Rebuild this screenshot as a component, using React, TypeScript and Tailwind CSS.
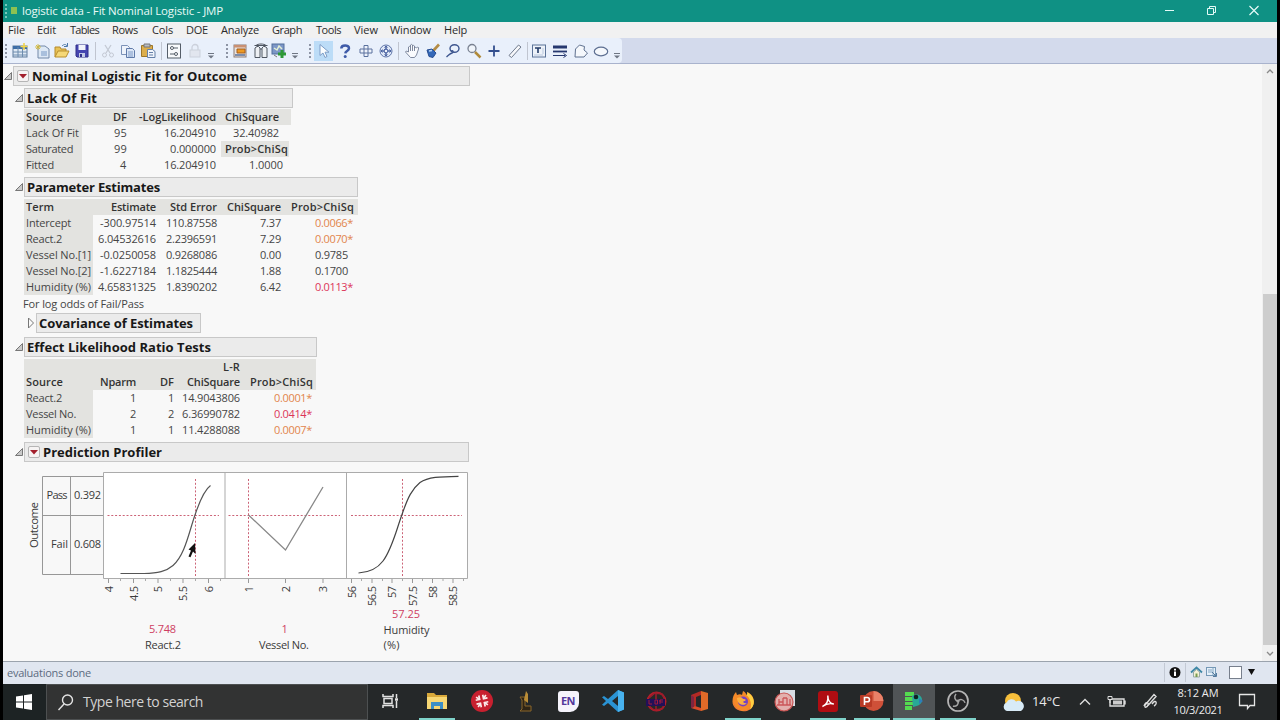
import { useLayoutEffect, useRef, type ReactNode } from "react";

/** Text whose letter spacing is adjusted so that it fills a given width. */
function Fit({ w, children, className = "" }: { w: number; children: string; className?: string }) {
  const ref = useRef<HTMLSpanElement>(null);
  useLayoutEffect(() => {
    const el = ref.current;
    if (!el) return;
    el.style.letterSpacing = "0px";
    const natural = el.getBoundingClientRect().width;
    el.style.letterSpacing = `${(w - natural) / children.length}px`;
  }, [w, children]);
  return (
    <span ref={ref} className={`inline-block whitespace-nowrap ${className}`}>
      {children}
    </span>
  );
}

function Icon({ children, size = 16 }: { children: ReactNode; size?: number }) {
  return (
    <svg width={size} height={size} viewBox="0 0 16 16" fill="none" className="shrink-0">
      {children}
    </svg>
  );
}

/* ---------- toolbar ---------- */

const table = (
  <>
    <rect x="1" y="3" width="14" height="11" fill="#dfe9f4" stroke="#5f7b9c" />
    <path d="M1 3h14v3H1z" fill="#3d6ea8" />
    <path d="M1 9h14M1 12h14M6 4v10M10.500 4v10" stroke="#6d8cae" />
    <path d="M12 0v7M8.500 3.500h7" stroke="#f2d64b" strokeWidth="1.600" />
  </>
);
const newScript = (
  <>
    <path d="M4 3h7l4 3v9H4z" fill="#dce8f5" stroke="#7389a8" />
    <path d="M7 8h6v5H7z" fill="#a9c0dd" />
    <path d="M4 1v6M1 4h6M2 2l4 4M6 2L2 6" stroke="#d3b93c" strokeWidth="0.900" />
  </>
);
const open = (
  <>
    <path d="M1 14V4h5l1 2h5v3" fill="#e8c256" stroke="#b48a2c" />
    <path d="M1 14l3-6h11l-3 6z" fill="#f5d878" stroke="#b98f2e" />
    <path d="M8 3c2-2 4-2 5 0M13.500 0v3.500H10" stroke="#4c77a8" />
  </>
);
const save = (
  <>
    <path d="M2 2h12v12H3l-1-1z" fill="#4545b0" stroke="#303089" />
    <path d="M4.500 2h7v5h-7z" fill="#f1f4fb" />
    <path d="M5 10h6v4H5z" fill="#c3cae6" />
    <path d="M6 11h2v3H6z" fill="#303089" />
  </>
);
const cut = (
  <>
    <path d="M5 2l5 8M11 2L6 10" stroke="#c4c9d4" strokeWidth="1.300" />
    <circle cx="4.500" cy="12" r="2" stroke="#c4c9d4" />
    <circle cx="11.500" cy="12" r="2" stroke="#c4c9d4" />
  </>
);
const copy = (
  <>
    <path d="M1.500 2.500h6l2 2v7h-8z" fill="#eef3fb" stroke="#7c92b8" />
    <path d="M6.500 5.500h6l2 2v7h-8z" fill="#dbe6f6" stroke="#5f7aa9" />
    <path d="M8 9h5M8 11h5M8 13h5" stroke="#7f9bc8" />
  </>
);
const paste = (
  <>
    <path d="M1.500 2.500h11v11h-11z" fill="#dcae4c" stroke="#9e7728" />
    <path d="M4 1h6v3H4z" fill="#b9bcc2" stroke="#777" />
    <path d="M7.500 6.500h5l2.500 2v6H7.500z" fill="#f1f5fb" stroke="#6580a8" />
    <path d="M9 9.500h4M9 12h4" stroke="#6580a8" />
  </>
);
const prefs = (
  <>
    <rect x="1.500" y="1" width="13" height="14" fill="#f8fafc" stroke="#555e69" />
    <path d="M4 5h8M4 11h8" stroke="#555e69" />
    <circle cx="6" cy="5" r="1.500" fill="#fff" stroke="#555e69" />
    <circle cx="10" cy="11" r="1.500" fill="#fff" stroke="#555e69" />
  </>
);
const lock = (
  <>
    <path d="M5 7V4.500a3 3 0 016 0V7" stroke="#ccd1dc" strokeWidth="1.300" />
    <rect x="3" y="7" width="10" height="7" fill="#e2e6ef" stroke="#ccd1dc" />
  </>
);
const journal = (
  <>
    <rect x="2" y="2" width="12" height="12" fill="#e9e4e0" stroke="#8d7b74" />
    <path d="M2 2h12v2.500H2z" fill="#c99073" />
    <path d="M5 6h8v4H5z" fill="#ee9a22" stroke="#a65c1c" />
    <path d="M3 12h10" stroke="#59729d" strokeWidth="1.500" />
  </>
);
const binocular = (
  <>
    <path d="M2 14.500V5l2-1.500h1.500L7 5v9.500zM9 14.500V5l1.500-1.500H12L14 5v9.500z" fill="#edf0f4" stroke="#4f5661" />
    <path d="M7 6h2M1.500 2.500h13M3 2.500c2-2 8-2 10 0" stroke="#4f5661" />
  </>
);
const addPlot = (
  <>
    <rect x="1" y="1" width="12" height="10" fill="#7d97c7" stroke="#536f9c" />
    <path d="M3 5l3 2 2-4 3 3" stroke="#e4f0d4" strokeWidth="1.500" />
    <path d="M3 12l3 2" stroke="#777" />
    <path d="M11 7v8M7 11h8" stroke="#2f9a38" strokeWidth="3" />
  </>
);
const arrow = (
  <path d="M4 1.500v11l3-2.500 2 4.500 2-1-2-4.300h4z" fill="#fafdff" stroke="#7e9dc6" />
);
const help = (
  <>
    <path d="M4.300 5.500C4.300 1.500 12 1.500 12 5.300c0 2.700-3.500 2.600-3.700 5" stroke="#3f5ba8" strokeWidth="2.500" />
    <circle cx="8.200" cy="13.500" r="1.500" fill="#3f5ba8" />
  </>
);
const cross = (
  <path d="M6 2.500h4V6h4v4h-4v3.500H6V10H2V6h4zM6 6h4v4H6z" fill="#eef3fb" stroke="#5a719e" />
);
const target = (
  <>
    <circle cx="8" cy="8" r="6" fill="#dfe8f7" stroke="#5d73a8" />
    <path d="M8 3v10M3 8h10" stroke="#4c64a2" strokeWidth="1.600" />
    <path d="M6.500 4.500L8 3l1.500 1.500M6.500 11.500L8 13l1.500-1.500M4.500 6.500L3 8l1.500 1.500M11.500 6.500L13 8l-1.500 1.500" stroke="#4c64a2" />
    <rect x="6.500" y="6.500" width="3" height="3" fill="#eef3fb" stroke="#4c64a2" strokeWidth="0.800" />
  </>
);
const hand = (
  <path
    d="M4.500 9V4q1.200-1.200 2 0V2q1-1.200 2 0v1q1-1.200 2 0v2q1-1.200 2 0l1-1q1.500 0 1 2l-2 6-2 2.500H6.500L1.500 9q0-2 3 0M6.500 4v4M8.500 3v5M10.500 4v4"
    fill="#fafbfe"
    stroke="#727d94"
    strokeWidth="0.900"
  />
);
const brush = (
  <>
    <path d="M8 8l6-6.500" stroke="#b38b45" strokeWidth="2.600" />
    <path d="M2 7l5-1 4 4-3 4.500-4-1z" fill="#3468b8" stroke="#274d91" />
    <path d="M4 8l3-.500" stroke="#b6d3f5" strokeWidth="1.500" />
  </>
);
const lassoTool = (
  <>
    <ellipse cx="9.500" cy="5.500" rx="4.500" ry="3.800" stroke="#3e568f" strokeWidth="1.400" />
    <path d="M6 8.500c2-2 3 1 1 1.500S5 11 1.500 14" stroke="#3e568f" strokeWidth="1.400" />
  </>
);
const magnify = (
  <>
    <circle cx="6" cy="5.500" r="4" fill="#f0f5fb" stroke="#798191" strokeWidth="1.300" />
    <path d="M9 9l5.500 5.500" stroke="#b08a3a" strokeWidth="2.500" />
  </>
);
const plus = <path d="M8 2.500v11M2.500 8h11" stroke="#334f8e" strokeWidth="1.800" />;
const annotate = (
  <path d="M2 12.500L11.500 2l2.500 2L4.500 14.500z" fill="#f7f8fb" stroke="#707b8d" />
);
const textBox = (
  <>
    <rect x="1.500" y="2" width="13" height="12" fill="#edf2f9" stroke="#5b7398" />
    <path d="M4 5h6M7 5v5" stroke="#243c68" strokeWidth="1.600" />
    <path d="M12 5v6M3 12h9" stroke="#b9c8de" />
  </>
);
const lines = (
  <>
    <path d="M1 4h14" stroke="#26386f" strokeWidth="3" />
    <path d="M1 8.500h14" stroke="#26386f" strokeWidth="1.800" />
    <path d="M1 12.500h12M11.500 10.500l3 2-3 2" stroke="#26386f" />
  </>
);
const polygon = <path d="M2.500 6l4-4 5 1.500-.500 3.500 3.500 3-3.500 4H2z" fill="#f5f8fc" stroke="#5f718f" />;
const oval = <ellipse cx="8" cy="8.500" rx="6.700" ry="4.300" fill="#f5f8fc" stroke="#5d6f91" strokeWidth="1.200" />;

function Tool({ icon, cell, active }: { icon: ReactNode; cell: string; active?: boolean }) {
  return (
    <div className={`flex h-full shrink-0 items-center justify-center ${cell}`}>
      <div className={active ? "flex h-[20px] w-[19px] items-center justify-center bg-[#bcdcf7]" : ""}>
        <Icon>{icon}</Icon>
      </div>
    </div>
  );
}

const Grip = ({ cell }: { cell: string }) => (
  <div className={`flex h-full shrink-0 items-center justify-end pr-[2px] ${cell}`}>
    <div className="flex flex-col gap-[2px]">
      <i className="size-[2px] bg-[#8d94a4]" />
      <i className="size-[2px] bg-[#8d94a4]" />
      <i className="size-[2px] bg-[#8d94a4]" />
      <i className="size-[2px] bg-[#8d94a4]" />
    </div>
  </div>
);
const Sep = ({ cell }: { cell: string }) => (
  <div className={`flex h-full shrink-0 items-center justify-center ${cell}`}>
    <div className="h-[18px] w-px bg-[#c0c5d0]" />
  </div>
);
const More = ({ cell }: { cell: string }) => (
  <div className={`flex h-full shrink-0 items-end justify-center pb-[4px] pr-[2px] ${cell}`}>
    <svg width="6" height="6">
      <path d="M0 .500h6" stroke="#6f7683" />
      <path d="M0 2.500h6l-3 3z" fill="#6f7683" />
    </svg>
  </div>
);

function Toolbar() {
  return (
    <div className="h-[26px] border-b border-[#a9b3cd] bg-[#d3daec]">
      <div className="flex h-[25px] w-[619px] items-center rounded-r bg-[#e9f0fb]">
        <Grip cell="w-[6px]" />
        <Tool icon={table} cell="w-[22px]" />
        <Tool icon={newScript} cell="w-[21px]" />
        <Tool icon={open} cell="w-[20px]" />
        <Tool icon={save} cell="w-[20px]" />
        <Sep cell="w-[6px]" />
        <Tool icon={cut} cell="w-[20px]" />
        <Tool icon={copy} cell="w-[19px]" />
        <Tool icon={paste} cell="w-[22px]" />
        <Sep cell="w-[4px]" />
        <Tool icon={prefs} cell="w-[22px]" />
        <Tool icon={lock} cell="w-[20px]" />
        <More cell="w-[13px]" />
        <Grip cell="w-[12px]" />
        <Tool icon={journal} cell="w-[20px]" />
        <Tool icon={binocular} cell="w-[21px]" />
        <Tool icon={addPlot} cell="w-[16px]" />
        <More cell="w-[18px]" />
        <Grip cell="w-[8px]" />
        <Tool icon={arrow} cell="w-[21px]" active />
        <Tool icon={help} cell="w-[21px]" />
        <Tool icon={cross} cell="w-[21px]" />
        <Tool icon={target} cell="w-[20px]" />
        <Sep cell="w-[5px]" />
        <Tool icon={hand} cell="w-[21px]" />
        <Tool icon={brush} cell="w-[21px]" />
        <Tool icon={lassoTool} cell="w-[20px]" />
        <Tool icon={magnify} cell="w-[21px]" />
        <Tool icon={plus} cell="w-[20px]" />
        <Tool icon={annotate} cell="w-[21px]" />
        <Sep cell="w-[4px]" />
        <Tool icon={textBox} cell="w-[20px]" />
        <Tool icon={lines} cell="w-[21px]" />
        <Tool icon={polygon} cell="w-[21px]" />
        <Tool icon={oval} cell="w-[20px]" />
        <More cell="w-[14px]" />
      </div>
    </div>
  );
}

/* ---------- title and menu ---------- */

function TitleBar() {
  return (
    <div className="flex h-[22px] items-center bg-[#0f9184] text-white">
      <svg width="14" height="16" className="ml-px">
        <path d="M2 1v14" stroke="#8fd6c8" strokeWidth="1.600" strokeDasharray="2 2" />
        <rect x="7" y="4" width="6" height="7" fill="#8cc152" />
      </svg>
      <Fit w={201} className="ml-[4px] text-[11.500px] leading-[22px] text-[#e8faf7]">
        logistic data - Fit Nominal Logistic - JMP
      </Fit>
      <svg width="102" height="16" className="ml-auto mr-[16px]" fill="none" stroke="#e4fbf7">
        <path d="M6 7.500h9" />
        <path d="M48.500 5.500h6v6h-6zM50.500 5V3.500h6v6H55" />
        <path d="M90.500 3l9 9M99.500 3l-9 9" strokeWidth="1.200" />
      </svg>
    </div>
  );
}

function MenuBar() {
  return (
    <div className="flex h-[16px] items-center bg-[#f1f1f1] pl-[5px] text-[11px] leading-[16px] text-[#2b2b2b]">
      <Fit w={17} className="mr-[12px]">File</Fit>
      <Fit w={19} className="mr-[14px]">Edit</Fit>
      <Fit w={29} className="mr-[13px]">Tables</Fit>
      <Fit w={26} className="mr-[14px]">Rows</Fit>
      <Fit w={21} className="mr-[13px]">Cols</Fit>
      <Fit w={22} className="mr-[13px]">DOE</Fit>
      <Fit w={38} className="mr-[13px]">Analyze</Fit>
      <Fit w={30} className="mr-[14px]">Graph</Fit>
      <Fit w={25} className="mr-[13px]">Tools</Fit>
      <Fit w={24} className="mr-[12px]">View</Fit>
      <Fit w={41} className="mr-[13px]">Window</Fit>
      <Fit w={23}>Help</Fit>
    </div>
  );
}

/* ---------- report ---------- */

function Heading({
  title,
  w,
  box,
  indent,
  menu,
  closed,
}: {
  title: string;
  w: number;
  box: string;
  indent: string;
  menu?: boolean;
  closed?: boolean;
}) {
  return (
    <div className={`flex h-[20px] items-center ${indent}`}>
      <svg width="10" height="12" className="shrink-0" stroke="#777" fill={closed ? "#fafafa" : "#c9c9c9"}>
        {closed ? <path d="M2.500 1l5 5-5 5z" /> : <path d="M1.500 9.500h7v-7z" />}
      </svg>
      <div className={`flex h-[20px] items-center border border-[#c8c8c8] bg-[#ebebeb] ${box}`}>
        {menu && (
          <div className="ml-[3px] mr-[3px] flex h-[12px] w-[12px] items-center justify-center rounded-[2px] border border-[#b5b5b5] bg-[#f6f3f3]">
            <svg width="8" height="5">
              <path d="M0 0h8L4 4.500z" fill="#a31f2c" />
            </svg>
          </div>
        )}
        <Fit w={w} className={`text-[13px] font-bold leading-[18px] text-[#181818] ${menu ? "" : "ml-[2px]"}`}>
          {title}
        </Fit>
      </div>
    </div>
  );
}

type Cell = { t: string; w: number; c?: string };

function Row({ cells, cols, className = "" }: { cells: Cell[]; cols: string; className?: string }) {
  return (
    <div className={`grid h-[16px] leading-[16px] ${cols} ${className}`}>
      {cells.map((cell, i) => (
        <div
          key={i}
          className={`${i === 0 ? "bg-[#e3e3e0] pl-[2px] text-left" : "text-right"} ${cell.c ?? ""}`}
        >
          {cell.t && <Fit w={cell.w}>{cell.t}</Fit>}
        </div>
      ))}
    </div>
  );
}

const c = (t: string, w: number, cls?: string): Cell => ({ t, w, c: cls });
const ORANGE = "text-[#e2854c] pr-[1px]";
const RED = "text-[#dc3558] pr-[1px]";
const HEAD = "bg-[#e3e3e0] font-semibold text-[#333]";

const LACK = "grid-cols-[58px_45px_89px_75px]";
const PARAM = "grid-cols-[69px_64px_60px_64px_77px]";
const EFFECT = "grid-cols-[69px_44px_37px_66px_76px]";

function LackOfFit() {
  return (
    <div className="ml-[21px] mt-px w-[267px]">
      <Row
        cols={LACK}
        className={HEAD}
        cells={[c("Source", 37), c("DF", 14), c("-LogLikelihood", 77), c("ChiSquare", 54, "pr-[12px]")]}
      />
      <Row cols={LACK} cells={[c("Lack Of Fit", 53), c("95", 13), c("16.204910", 52), c("32.40982", 46, "pr-[12px]")]} />
      <Row
        cols={LACK}
        cells={[
          c("Saturated", 47),
          c("99", 13),
          c("0.000000", 46),
          c("Prob>ChiSq", 63, "ml-[5px] mr-[2px] bg-[#e3e3e0] pr-[1px] font-semibold text-[#333]"),
        ]}
      />
      <Row cols={LACK} cells={[c("Fitted", 28), c("4", 7), c("16.204910", 52), c("1.0000", 34, "pr-[8px]")]} />
    </div>
  );
}

function ParameterEstimates() {
  return (
    <div className="ml-[21px] mt-[2px] w-[334px]">
      <Row
        cols={PARAM}
        className={HEAD}
        cells={[
          c("Term", 28),
          c("Estimate", 45, "pr-[1px]"),
          c("Std Error", 47),
          c("ChiSquare", 54),
          c("Prob>ChiSq", 63, "pr-[4px]"),
        ]}
      />
      <Row cols={PARAM} cells={[c("Intercept", 45), c("-300.97514", 56, "pr-[1px]"), c("110.87558", 51), c("7.37", 21), c("0.0066*", 38, ORANGE + " mr-[4px]")]} />
      <Row cols={PARAM} cells={[c("React.2", 36), c("6.04532616", 58, "pr-[1px]"), c("2.2396591", 51), c("7.29", 21), c("0.0070*", 38, ORANGE + " mr-[4px]")]} />
      <Row cols={PARAM} cells={[c("Vessel No.[1]", 65), c("-0.0250058", 56, "pr-[1px]"), c("0.9268086", 51), c("0.00", 21), c("0.9785", 33, "pr-[10px]")]} />
      <Row cols={PARAM} cells={[c("Vessel No.[2]", 65), c("-1.6227184", 56, "pr-[1px]"), c("1.1825444", 51), c("1.88", 21), c("0.1700", 33, "pr-[10px]")]} />
      <Row cols={PARAM} cells={[c("Humidity (%)", 65), c("4.65831325", 58, "pr-[1px]"), c("1.8390202", 51), c("6.42", 21), c("0.0113*", 38, RED + " mr-[4px]")]} />
    </div>
  );
}

function EffectTests() {
  return (
    <div className="ml-[21px] mt-[2px] w-[292px]">
      <div className={`${HEAD} -mb-px`}>
        <Row cols={EFFECT} cells={[c("", 0), c("", 0), c("", 0), c("L-R", 17), c("", 0)]} />
      </div>
      <Row
        cols={EFFECT}
        className={HEAD}
        cells={[c("Source", 37), c("Nparm", 36, "pr-[1px]"), c("DF", 14), c("ChiSquare", 53), c("Prob>ChiSq", 63, "pr-[3px]")]}
      />
      <Row cols={EFFECT} cells={[c("React.2", 36), c("1", 6, "pr-[1px]"), c("1", 6), c("14.9043806", 58), c("0.0001*", 38, ORANGE + " mr-[3px]")]} />
      <Row cols={EFFECT} cells={[c("Vessel No.", 50), c("2", 6, "pr-[1px]"), c("2", 6), c("6.36990782", 58), c("0.0414*", 38, RED + " mr-[3px]")]} />
      <Row cols={EFFECT} cells={[c("Humidity (%)", 65), c("1", 6, "pr-[1px]"), c("1", 6), c("11.4288088", 58), c("0.0007*", 38, ORANGE + " mr-[3px]")]} />
    </div>
  );
}

const TICKS: { x: number; label: string; len: number }[] = [
  { x: 108.5, label: "4", len: 6 },
  { x: 133.5, label: "4.5", len: 15 },
  { x: 158, label: "5", len: 6 },
  { x: 183, label: "5.5", len: 15 },
  { x: 208.5, label: "6", len: 6 },
  { x: 248.5, label: "1", len: 6 },
  { x: 285.5, label: "2", len: 6 },
  { x: 323, label: "3", len: 6 },
  { x: 351.5, label: "56", len: 12 },
  { x: 372, label: "56.5", len: 20 },
  { x: 392, label: "57", len: 12 },
  { x: 412.5, label: "57.5", len: 20 },
  { x: 432.5, label: "58", len: 12 },
  { x: 453, label: "58.5", len: 20 },
];
const MINOR = [120.5, 145.5, 170.5, 195.5, 220.5, 361.5, 382.5, 402.5, 422.5, 443, 463.5];

function Profiler() {
  return (
    <svg width="450" height="192" viewBox="24 466 450 192" className="ml-[21px] mt-[4px] block text-[11px]" fill="none">
      <rect x="103.500" y="472.500" width="364" height="106" fill="#fff" />
      <path d="M103 476.500H42.500v98H103M70.500 476.500v98M42.500 515.500H103" stroke="#979797" />
      <path d="M103.500 472.500h364v106h-364zM225 472.500v106M346.500 472.500v106" stroke="#ababab" />
      <path
        d="M107.500 515.500H219M228.500 515.500H340M351 515.500H462M195.500 479v97M248.500 479v97M402.500 479v97"
        stroke="#cc6377"
        strokeDasharray="2 1.800"
      />
      <path d="M120.500 573.500H144C158 573.300 166 571.500 173 565.500C185 555 189 532 195 515C200 500 205 489.500 210.500 485.500" stroke="#555" strokeWidth="1.200" />
      <path d="M248.500 515L285.500 550L323 487" stroke="#888" strokeWidth="1.300" />
      <path d="M358.500 573C368 572.500 377 569 383 561C392 549 396 531 402 514.500C408 497 412 489 420 482.500C428 477 440 476.500 458.500 476.300" stroke="#444" strokeWidth="1.200" />
      {TICKS.map((t) => (
        <g key={t.x}>
          <path d={`M${t.x} 579v4`} stroke="#999" />
          <text
            transform={`translate(${t.x + 4} 586) rotate(-90)`}
            textAnchor="end"
            textLength={t.len}
            fill="#3c3c3c"
            fontSize="11"
          >
            {t.label}
          </text>
        </g>
      ))}
      {MINOR.map((x) => (
        <path key={x} d={`M${x} 579v2`} stroke="#aaa" />
      ))}
      <g fill="#3a3a3a" fontSize="11">
        <text x="46.500" y="499" textLength="21">Pass</text>
        <text x="74" y="499" textLength="27">0.392</text>
        <text x="51" y="548" textLength="17">Fail</text>
        <text x="74" y="548" textLength="27">0.608</text>
        <text transform="translate(38 548) rotate(-90)" textLength="46" fontSize="11.500">Outcome</text>
        <text x="145" y="648.500" textLength="36">React.2</text>
        <text x="259" y="648.500" textLength="50">Vessel No.</text>
        <text x="383.500" y="633.500" textLength="46">Humidity</text>
        <text x="383.500" y="648.500" textLength="16">(%)</text>
      </g>
      <g fill="#cf3f62" fontSize="11">
        <text x="149" y="632.500" textLength="27">5.748</text>
        <text x="281.500" y="632.500">1</text>
        <text x="392" y="617.500" textLength="28">57.25</text>
      </g>
      <path d="M195 543l-6.500 6.500 2.500 1-2.500 6 2 .800 2.500-5.800 2.500 2.500z" fill="#111" />
    </svg>
  );
}

function Report() {
  return (
    <div className="flex h-[597px] bg-[#f8f8f8] text-[11px] text-[#454545]">
      <div className="min-w-0 flex-1 pt-[2px]">
        <Heading title="Nominal Logistic Fit for Outcome" w={215} box="w-[457px]" indent="" menu />
        <div className="h-[2px]" />
        <Heading title="Lack Of Fit" w={70} box="w-[269px]" indent="ml-[11px]" />
        <LackOfFit />
        <div className="h-[4px]" />
        <Heading title="Parameter Estimates" w={133} box="w-[334px]" indent="ml-[11px]" />
        <ParameterEstimates />
        <div className="ml-[20px] h-[18px] leading-[17px]">
          <Fit w={121}>For log odds of Fail/Pass</Fit>
        </div>
        <Heading title="Covariance of Estimates" w={154} box="w-[165px]" indent="ml-[23px]" closed />
        <div className="h-[4px]" />
        <Heading title="Effect Likelihood Ratio Tests" w={184} box="w-[293px]" indent="ml-[11px]" />
        <EffectTests />
        <div className="h-[4px]" />
        <Heading title="Prediction Profiler" w={119} box="w-[445px]" indent="ml-[11px]" menu />
        <Profiler />
      </div>
      <div className="flex w-[15px] flex-col items-center bg-[#f0f0f0]">
        <svg width="15" height="230" className="shrink-0" fill="none">
          <path d="M5 9l3-3 3 3" stroke="#8a8a8a" strokeWidth="1.300" />
        </svg>
        <div className="h-[351px] w-[14px] bg-[#cdcdcd]" />
        <svg width="15" height="16" className="shrink-0" fill="none">
          <path d="M5 7l3 3 3-3" stroke="#8a8a8a" strokeWidth="1.300" />
        </svg>
      </div>
    </div>
  );
}

/* ---------- status bar and taskbar ---------- */

function StatusBar() {
  return (
    <div className="flex h-[23px] items-start border-t border-[#9ba3ad] bg-[#e0e6f0] pl-[4px] text-[11px] text-[#5c6b80]">
      <Fit w={84} className="leading-[21px]">evaluations done</Fit>
      <svg width="116" height="21" className="ml-auto" fill="none">
        <path d="M3.500 1v19M24.500 1v19" stroke="#c3c9d4" />
        <circle cx="14" cy="10.500" r="5.500" fill="#111" />
        <path d="M14 6.800v1.600M14 9.500v4.500" stroke="#fff" strokeWidth="2" />
        <path d="M30 10.500l5.500-5 5.500 5" stroke="#3f88a6" strokeWidth="1.800" />
        <path d="M32.500 10v5h6v-5l-3-2.500z" fill="#f4f1d5" stroke="#98a9a5" />
        <path d="M34.500 11.500h2v3.500h-2z" fill="#799c50" />
        <rect x="45.500" y="5.500" width="9" height="8" fill="#e5f0f9" stroke="#7598b6" />
        <path d="M47 8h4M47 10h4M52 6v7" stroke="#84a7c4" />
        <path d="M51 10l4 4M55.500 11v3.500H52" stroke="#557b9e" />
        <rect x="68.500" y="4.500" width="12" height="12" fill="#fff" stroke="#777f8c" />
        <path d="M87 7h7l-3.500 6z" fill="#111" />
      </svg>
    </div>
  );
}

const explorer = (
  <svg width="22" height="20">
    <path d="M1 2h7l2 2h11v14H1z" fill="#d9a93b" />
    <path d="M1 6h20v12H1z" fill="#f7d774" />
    <path d="M5 18v-7h12v7h-3v-3H8v3z" fill="#3c8fc6" />
  </svg>
);
const redBadge = (
  <svg width="24" height="24" fill="none">
    <circle cx="12" cy="12" r="11" fill="#c8202f" />
    <g stroke="#fbeaea" strokeWidth="1.700" transform="rotate(-12 12 12)">
      <path d="M10 6v4H6M14 6v4h4M10 18v-4H6M14 18v-4h4" />
      <path d="M7 7l3 3M17 7l-3 3M7 17l3-3M17 17l-3-3" />
    </g>
  </svg>
);
const league = (
  <svg width="16" height="24" fill="none">
    <path d="M3 8h5v9h6v5H3l2-2v-9z" fill="#2e2415" stroke="#8b662b" />
    <path d="M9 2l-2 9 4 3V5z" fill="#b98c37" />
  </svg>
);
const endnote = (
  <div className="flex h-[21px] w-[21px] items-center justify-center rounded-[3px] rounded-br-[9px] bg-[#f5f3fb] font-['Open_Sans',sans-serif] text-[11px] font-bold tracking-[-0.500px] text-[#53379b]">
    EN
  </div>
);
const vscode = (
  <svg width="24" height="24">
    <path d="M17 1l6 2.500v17L17 23 7 14l-4 3-2-1.200L5 12 1 8.200 3 7l4 3zM17 7l-6 5 6 5z" fill="#2a93d4" fillRule="evenodd" />
    <path d="M17 1l6 2.500v17L17 23z" fill="#48b2ee" />
  </svg>
);
const globe = (
  <svg width="23" height="23" fill="none">
    <circle cx="11.500" cy="11.500" r="9" stroke="#b41e2b" strokeWidth="2" />
    <path d="M4 8l6-5 7 1 3 6M4 16l5 4 8-1 2-4M11 3v17" stroke="#9c1c2b" strokeWidth="1.500" />
    <path d="M1 9h19v7H1z" fill="#221059" />
    <path d="M4 10v4h3M10 10v4M10 10h2.500v4H10M15 10v4M18 10h-3v2h3" stroke="#a01d3c" />
  </svg>
);
const office = (
  <svg width="20" height="22">
    <path d="M12 1l7 2v16l-7 2z" fill="#e06a28" />
    <path d="M12 1L2 5v13l5-2V7l5-2z" fill="#b42a25" />
    <path d="M2 18l10 3v-3L6 16z" fill="#d94b2a" />
    <path d="M2 5v13l3-1V7z" fill="#7e2540" />
  </svg>
);
const firefox = (
  <svg width="24" height="24">
    <path d="M12 2c2 1 3 2 3.500 4 1-.500 1-2 .500-3 8 3 9 13 3 17.500C12 25 1 21 1.500 12 1.500 8 3 5 5 3l1 3c2-1 4-1 5 0z" fill="#f58a28" />
    <path d="M16 3c8 4 9 13 3 17.500 2-5 1-10-3.500-14.500 1-.500 1-2 .500-3z" fill="#fdcf42" />
    <path d="M2 9c0 12 8 15 17 11-6 4-17 2-17-11z" fill="#e23e6b" />
    <circle cx="12" cy="12.500" r="5" fill="#7542c3" />
    <path d="M6 9c3-1 5-1 6 1 3 0 3 1 2 2-3 0-2 3 2 2-4 4-10 1-10-5z" fill="#fbb140" />
  </svg>
);
const scanner = (
  <svg width="24" height="24" fill="none">
    <path d="M7 1h15v16H7z" fill="#d8dce3" />
    <circle cx="11" cy="13" r="9" fill="#e3b0ad" stroke="#c95453" strokeWidth="1.200" />
    <path d="M6 10v6M10 9v7M14 9v7M10 9h4M4 16h14M6 13h4M17 10v6" stroke="#cb5658" strokeWidth="1.300" />
  </svg>
);
const acrobat = (
  <svg width="20" height="21" fill="none">
    <rect width="20" height="21" rx="3" fill="#b00d12" />
    <path d="M4.500 15.500C8 14 10.500 10 9.800 4.500c0 5 2.500 8.500 6 8.500-4-1-8 0-11.300 2.500z" stroke="#fff" strokeWidth="1.400" />
  </svg>
);
const powerpoint = (
  <svg width="24" height="22" fill="none">
    <circle cx="13.500" cy="11" r="10" fill="#cf5038" />
    <path d="M13.500 1a10 10 0 0110 10h-10z" fill="#e98168" />
    <rect y="5" width="12" height="12" rx="1" fill="#b93a25" />
    <path d="M4.500 15V7.500h2.700c3 0 3 4.300 0 4.300H4.500" stroke="#fff" strokeWidth="1.600" />
  </svg>
);
const jmp = (
  <svg width="20" height="20">
    <path d="M1 1h9v4H1zM1 6h12v4H1zM1 11h9v3H1zM1 15h7v4H1z" fill="#54db50" />
    <path d="M8 5c4-3 10-1 10 4 0 4-4 6-9 7z" fill="#28a997" />
    <circle cx="12" cy="6" r="2.300" fill="#122" />
    <path d="M15 7l4 3-4 3z" fill="#2d7dba" />
  </svg>
);
const obs = (
  <svg width="24" height="24" fill="none">
    <circle cx="12" cy="12" r="10" fill="#242426" stroke="#b5b5b5" strokeWidth="1.700" />
    <g stroke="#a6a6a6" strokeWidth="1.500">
      <path id="blade" d="M10 5c-2.500 3-1 6.500 2 7" />
      <path d="M10 5c-2.500 3-1 6.500 2 7" transform="rotate(120 12 12)" />
      <path d="M10 5c-2.500 3-1 6.500 2 7" transform="rotate(240 12 12)" />
    </g>
    <circle cx="12" cy="12" r="1.600" fill="#a6a6a6" />
  </svg>
);

function TaskButton({ children, cell, running, active }: { children: ReactNode; cell: string; running?: boolean; active?: boolean }) {
  return (
    <div className={`flex h-full shrink-0 flex-col items-center ${cell} ${active ? "bg-[#505456]" : ""}`}>
      <div className="flex min-h-0 flex-1 items-center justify-center">{children}</div>
      <div className={`h-[2px] shrink-0 ${active ? "w-full" : "w-[36px]"} ${running ? "bg-[#7fd3ca]" : ""}`} />
    </div>
  );
}

function Taskbar() {
  return (
    <div className="flex h-[36px] items-center bg-[#252829] text-white">
      <div className="flex h-full w-[43px] items-center justify-center bg-[#1d2324] pr-[2px]">
        <svg width="16" height="16" fill="#fff">
          <path d="M0 2.500L7 1.500V7.500H0zM8 1.300L16 0v7.500H8zM0 8.500h7v6l-7-1zM8 8.500h8V16l-8-1.300z" />
        </svg>
      </div>
      <div className="flex h-full w-[322px] items-center border border-[#4d5051] bg-[#323333] pl-[11px]">
        <svg width="16" height="17" fill="none" stroke="#e4e4e4" strokeWidth="1.400">
          <circle cx="9.500" cy="6" r="5" />
          <path d="M6 10l-5.500 6" />
        </svg>
        <Fit w={120} className="ml-[9px] pb-px text-[14px] leading-[20px] text-[#d2d2d2]">Type here to search</Fit>
      </div>
      <TaskButton cell="w-[46px]">
        <svg width="18" height="16" fill="none" stroke="#e2e2e2" strokeWidth="1.500">
          <path d="M1 1v2.500h10V1M1 15v-2.500h10V15M2 5.500h8v5H2zM14.500 1v4M14.500 8v7" />
          <path d="M13 6.500h3" strokeWidth="2.500" />
        </svg>
      </TaskButton>
      <TaskButton cell="w-[46px]" running>{explorer}</TaskButton>
      <TaskButton cell="w-[43px]">{redBadge}</TaskButton>
      <TaskButton cell="w-[43px]">{league}</TaskButton>
      <TaskButton cell="w-[44px]">{endnote}</TaskButton>
      <TaskButton cell="w-[45px]">{vscode}</TaskButton>
      <TaskButton cell="w-[42px]">{globe}</TaskButton>
      <TaskButton cell="w-[44px]">{office}</TaskButton>
      <TaskButton cell="w-[43px]" running>{firefox}</TaskButton>
      <TaskButton cell="w-[41px]">{scanner}</TaskButton>
      <TaskButton cell="w-[45px]" running>{acrobat}</TaskButton>
      <TaskButton cell="w-[43px]" running>{powerpoint}</TaskButton>
      <TaskButton cell="w-[42px]" running active>{jmp}</TaskButton>
      <TaskButton cell="w-[45px]" running>{obs}</TaskButton>
      <div className="ml-[22px] flex h-full items-center">
        <svg width="22" height="20">
          <circle cx="11" cy="9" r="8" fill="#f7bf3b" />
          <path d="M5 19a4.500 4.500 0 01-.500-8.500A5.500 5.500 0 0114 9.500a5 5 0 015 9.500z" fill="#d8ebf7" />
        </svg>
        <Fit w={28} className="ml-[8px] text-[13px] text-[#e9e9e9]">14°C</Fit>
      </div>
      <svg width="110" height="24" className="ml-[12px] shrink-0" fill="none" stroke="#dedede" strokeWidth="1.400">
        <path d="M8 14.500l5-5 5 5" />
        <path d="M38 9h14v7H38zM53 10.500v4" />
        <path d="M41 10.500h9v4h-9z" fill="#ccc" stroke="none" />
        <path d="M36 6.500h4v3h-4zM38 10v3" fill="#252829" strokeWidth="1" />
        <path d="M72 16c2-5 5-4 4-1s-4 3-3 0L82 4.500l2 2-8 9M80 14c4-6 6 0 2 2" />
      </svg>
      <div className="-ml-[12px] flex w-[56px] shrink-0 flex-col items-center pb-[3px] text-[11px] leading-[17px] text-[#ececec]">
        <Fit w={41}>8:12 AM</Fit>
        <Fit w={49}>10/3/2021</Fit>
      </div>
      <svg width="18" height="18" className="ml-auto mr-[21px] shrink-0" fill="none" stroke="#e6e6e6" strokeWidth="1.300">
        <path d="M1.500 1.500h15v11h-4.500l-2.500 3v-3h-8z" />
      </svg>
    </div>
  );
}

export default function App() {
  return (
    <div className="h-[720px] w-[1280px] overflow-hidden bg-black px-[3px] font-['Open_Sans','Noto_Sans',sans-serif]">
      <TitleBar />
      <MenuBar />
      <Toolbar />
      <Report />
      <StatusBar />
      <Taskbar />
    </div>
  );
}
